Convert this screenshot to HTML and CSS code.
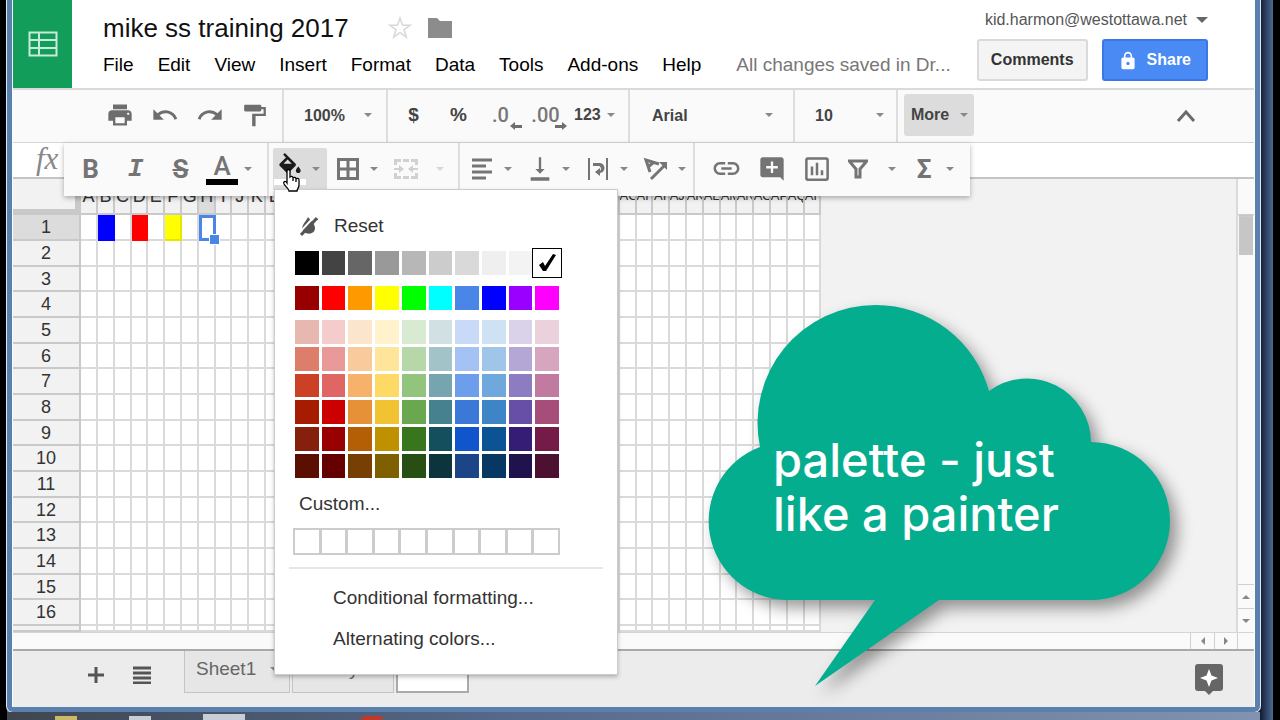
FILE: index.html
```
<!DOCTYPE html>
<html lang="en">
<head>
    <meta charset="UTF-8">
    <meta name="viewport" content="width=device-width, initial-scale=1.0">
    <title>mike ss training 2017</title>
    <link rel="stylesheet" href="styles.css">
</head>
<body>
    <div class="desktop">
        <div class="window">
            <header class="header">
                <a class="logo" href="#" aria-label="Sheets home">
                    <svg width="30" height="26" viewBox="0 0 30 26" fill="none" stroke="#c9ead8" stroke-width="2"><path d="M1.500 1.500h27v23h-27zM1 9h28M1 17h28M11 1v24"/></svg>
                </a>
                <div class="doc">
                    <div class="title-row">
                        <h1>mike ss training 2017</h1>
                        <button class="plain" aria-label="Star"><svg width="24" height="24" viewBox="0 0 24 24" fill="none" stroke="#d8d8d8" stroke-width="1.500"><path d="M12 2l2.600 7.300H22l-6 4.500 2.300 7.400L12 16.700l-6.300 4.500L8 13.800 2 9.300h7.400z"/></svg></button>
                        <button class="plain" aria-label="Move to folder"><svg width="24" height="22" viewBox="0 0 24 22" fill="#8c8c8c"><path d="M0 1h9l3 3h12v17H0z"/></svg></button>
                    </div>
                    <div class="menu-row">
                        <nav class="menu">
                            <button>File</button>
                            <button>Edit</button>
                            <button>View</button>
                            <button>Insert</button>
                            <button>Format</button>
                            <button>Data</button>
                            <button>Tools</button>
                            <button>Add-ons</button>
                            <button>Help</button>
                        </nav>
                        <span class="status">All changes saved in Dr...</span>
                    </div>
                </div>
                <div class="account">
                    <button class="email">kid.harmon@westottawa.net <span class="arrow dark"></span></button>
                    <div class="actions">
                        <button class="btn">Comments</button>
                        <button class="btn share">
                            <svg width="18" height="19" viewBox="3 0 18 23" fill="#fff"><path d="M18 8h-1V6c0-2.760-2.240-5-5-5S7 3.240 7 6v2H6c-1.100 0-2 .9-2 2v10c0 1.100.9 2 2 2h12c1.100 0 2-.9 2-2V10c0-1.100-.9-2-2-2zm-6 9c-1.100 0-2-.9-2-2s.9-2 2-2 2 .9 2 2-.9 2-2 2zm3.100-9H8.900V6c0-1.710 1.390-3.100 3.100-3.100 1.710 0 3.100 1.390 3.100 3.100v2z"/></svg>
                            Share
                        </button>
                    </div>
                </div>
            </header>

            <div class="toolbar">
                <div class="group first">
                    <button class="tool" aria-label="Print"><svg width="28" height="28" viewBox="0 0 24 24"><path d="M19 8H5c-1.660 0-3 1.340-3 3v6h4v4h12v-4h4v-6c0-1.660-1.340-3-3-3zm-3 11H8v-5h8v5zm3-7c-.55 0-1-.45-1-1s.45-1 1-1 1 .45 1 1-.45 1-1 1zm-1-9H6v4h12V3z"/></svg></button>
                    <button class="tool" aria-label="Undo"><svg width="28" height="28" viewBox="0 0 24 24"><path d="M12.500 8c-2.650 0-5.050.99-6.900 2.600L2 7v9h9l-3.620-3.620c1.390-1.160 3.160-1.880 5.120-1.880 3.540 0 6.550 2.310 7.600 5.500l2.370-.78C21.080 11.030 17.150 8 12.500 8z"/></svg></button>
                    <button class="tool" aria-label="Redo"><svg width="28" height="28" viewBox="0 0 24 24"><path d="M18.400 10.600C16.550 8.990 14.150 8 11.500 8c-4.650 0-8.580 3.030-9.960 7.220L3.900 16c1.050-3.190 4.050-5.500 7.600-5.500 1.950 0 3.730.72 5.120 1.880L13 16h9V7l-3.600 3.600z"/></svg></button>
                    <button class="tool" aria-label="Paint format"><svg width="24" height="25" viewBox="2 1 21 21"><path d="M18 4V3c0-.55-.45-1-1-1H4c-.55 0-1 .45-1 1v4c0 .55.45 1 1 1h13c.55 0 1-.45 1-1V6h2v4H10v11h3v-9h9V4h-4z"/></svg></button>
                </div>
                <div class="group zoom">
                    <select aria-label="Zoom"><option>100%</option></select>
                    <span class="arrow"></span>
                </div>
                <div class="group formats">
                    <button class="tool sign">$</button>
                    <button class="tool sign">%</button>
                    <button class="tool decimal">.0<svg width="12" height="8" viewBox="0 0 12 8"><path d="M0 4l5-4v3h7v3H5v2z"/></svg></button>
                    <button class="tool decimal">.00<svg width="12" height="8" viewBox="0 0 12 8"><path d="M12 4L7 0v3H0v3h7v2z"/></svg></button>
                    <button class="tool more-formats">123 <span class="arrow"></span></button>
                </div>
                <div class="group font">
                    <select aria-label="Font"><option>Arial</option></select>
                    <span class="arrow"></span>
                </div>
                <div class="group size">
                    <select aria-label="Font size"><option>10</option></select>
                    <span class="arrow"></span>
                </div>
                <button class="more">More <span class="arrow"></span></button>
                <button class="collapse" aria-label="Hide menus"><svg width="20" height="14" viewBox="0 0 20 14" fill="none" stroke="#6b6b6b" stroke-width="3"><path d="M2 12l8-9 8 9"/></svg></button>

                <div class="overflow-bar">
                    <div class="group text-tools">
                        <button class="icon letter">B</button>
                        <button class="icon letter italic">I</button>
                        <button class="icon letter strike">S</button>
                        <button class="split">
                            <span class="pic letter text-color">A</span>
                            <span class="arrow"></span>
                        </button>
                    </div>
                    <div class="group cell-tools">
                        <button class="split active" aria-label="Fill color">
                            <span class="pic fill">
                                <svg width="26" height="26" viewBox="1 0 22 22" fill="#1b1b1b"><path d="M16.560 8.940L7.620 0 6.210 1.410l2.380 2.380-5.150 5.150c-.59.59-.59 1.540 0 2.120l5.500 5.500c.29.29.68.44 1.060.44s.77-.15 1.060-.44l5.500-5.500c.59-.58.59-1.530 0-2.120zM6.500 9L10 5.500 13.500 9H6.500zM19 11.500s-2 2.170-2 3.500c0 1.100.9 2 2 2s2-.9 2-2c0-1.330-2-3.500-2-3.500z"/></svg>
                            </span>
                            <span class="arrow"></span>
                        </button>
                        <button class="split" aria-label="Borders">
                            <span class="pic"><svg width="22" height="22" viewBox="0 0 22 22" fill="none" stroke="#747474" stroke-width="3"><path d="M1.500 1.500h19v19h-19zM11 1v20M1 11h20"/></svg></span>
                            <span class="arrow"></span>
                        </button>
                        <button class="split wide" aria-label="Merge cells" disabled>
                            <span class="pic"><svg width="26" height="22" viewBox="0 0 26 22"><path d="M1 1h7v3H4v3H1zM10 1h6v3h-6zM18 1h7v6h-3V4h-4zM1 15h3v3h4v3H1zM10 18h6v3h-6zM18 18h4v-3h3v6h-7zM1 10h5V7l5 4-5 4v-3H1zM25 10h-5V7l-5 4 5 4v-3h5z"/></svg></span>
                            <span class="arrow"></span>
                        </button>
                    </div>
                    <div class="group align-tools">
                        <button class="split" aria-label="Horizontal align">
                            <span class="pic"><svg width="22" height="22" viewBox="0 0 22 22" fill="none" stroke="#747474" stroke-width="3"><path d="M1 2h20M1 8h14M1 14h20M1 20h14"/></svg></span>
                            <span class="arrow"></span>
                        </button>
                        <button class="split" aria-label="Vertical align">
                            <span class="pic"><svg width="28" height="28" viewBox="0 0 24 24"><path d="M16 12h-3V2h-2v10H8l4 4 4-4zM4 19v3h16v-3H4z"/></svg></span>
                            <span class="arrow"></span>
                        </button>
                        <button class="split" aria-label="Text wrapping">
                            <span class="pic"><svg width="22" height="22" viewBox="0 0 22 22"><path d="M1 0h2v22H1zM19 0h2v22h-2zM6 5h6a5 5 0 0 1 1 10v3l-5-4 5-4v3a3 3 0 0 0-1-5H6z"/></svg></span>
                            <span class="arrow"></span>
                        </button>
                        <button class="split" aria-label="Text rotation">
                            <span class="pic"><svg width="26" height="24" viewBox="0 0 26 24" fill="none" stroke="#747474" stroke-width="3"><path d="M7 15L3 3l13 4M5 10l6-5M8 22L21 9"/><path d="M24 5v8l-8-8z" fill="#747474" stroke="none"/></svg></span>
                            <span class="arrow"></span>
                        </button>
                    </div>
                    <div class="group insert-tools">
                        <button class="icon" aria-label="Insert link"><svg width="31" height="31" viewBox="0 0 24 24"><path d="M3.900 12c0-1.710 1.390-3.100 3.100-3.100h4V7H7c-2.760 0-5 2.240-5 5s2.240 5 5 5h4v-1.900H7c-1.710 0-3.100-1.390-3.100-3.100zM8 13h8v-2H8v2zm9-6h-4v1.900h4c1.710 0 3.100 1.390 3.100 3.100s-1.390 3.100-3.100 3.100h-4V17h4c2.760 0 5-2.240 5-5s-2.240-5-5-5z"/></svg></button>
                        <button class="icon" aria-label="Insert comment"><svg width="28" height="28" viewBox="0 0 24 24"><path d="M22 4c0-1.100-.9-2-2-2H4c-1.100 0-2 .9-2 2v13c0 1.100.9 2 2 2h15l3 3V4zm-5 7.500h-4v4h-2v-4H7v-2h4v-4h2v4h4v2z"/></svg></button>
                        <button class="icon" aria-label="Insert chart"><svg width="30" height="30" viewBox="0 0 24 24"><path d="M9 17H7v-7h2v7zm4 0h-2V7h2v10zm4 0h-2v-4h2v4zm2 2.500H5c-.3 0-.5-.2-.5-.5V5c0-.3.2-.5.5-.5h14c.3 0 .5.2.5.5v14c0 .3-.2.500-.5.500zM19.500 2.500h-15c-1.100 0-2 .9-2 2v15c0 1.100.9 2 2 2h15c1.100 0 2-.9 2-2v-15c0-1.100-.9-2-2-2z" fill-rule="evenodd"/></svg></button>
                        <button class="split wide" aria-label="Filter">
                            <span class="pic"><svg width="22" height="20" viewBox="0 0 22 20" fill="none" stroke="#747474" stroke-width="3"><path d="M1 2h20M3 3l6 7v8h4v-8l6-7"/></svg></span>
                            <span class="arrow"></span>
                        </button>
                        <button class="split">
                            <span class="pic letter">Σ</span>
                            <span class="arrow"></span>
                        </button>
                    </div>

                    <div class="color-menu">
                        <button class="item reset">
                            <svg width="18" height="20" viewBox="0 0 18 20" fill="#555"><path d="M8 1c1 2 7 6 7 11 0 6-7 7-11 4C-1 11 6 6 8 1z"/><path d="M0 16L14 1" stroke="#fff" stroke-width="2"/><path d="M1 19L17 2" stroke="#555" stroke-width="3"/></svg>
                            Reset
                        </button>
                        <div class="swatches" id="grays"></div>
                        <div class="swatches" id="brights"></div>
                        <div class="swatches shades" id="shades"></div>
                        <button class="item custom">Custom...</button>
                        <div class="custom-colors" id="customs"></div>
                        <hr>
                        <button class="item">Conditional formatting...</button>
                        <button class="item">Alternating colors...</button>
                    </div>

                    <svg class="pointer" width="20" height="24" viewBox="0 0 20 24" fill="#fff" stroke="#000" stroke-width="1.300"><path d="M5 13V3c0-2 3-2 3 0v6c1-1 3-1 3 1 1-1 3-1 3 1 1-1 3-1 3 1v5c0 3-2 4-2 6H7c0-2-3-4-5-7-1-2 1-4 3-1zM11 10v3M14 11v3"/></svg>
                </div>
            </div>

            <div class="formula-bar">
                <label for="formula">fx</label>
                <input id="formula" type="text">
            </div>

            <main class="sheet-area">
                <div class="sheet">
                    <table class="grid">
                        <thead><tr id="columns"><th class="corner"></th></tr></thead>
                        <tbody id="rows"></tbody>
                    </table>
                </div>
                <div class="v-scroll">
                    <div class="thumb"></div>
                    <button class="up" aria-label="Scroll up"></button>
                    <button class="down" aria-label="Scroll down"></button>
                </div>
            </main>
            <div class="h-scroll">
                <button class="left" aria-label="Scroll left"></button>
                <button class="right" aria-label="Scroll right"></button>
            </div>

            <footer class="footer">
                <button class="plain" aria-label="Add sheet"><svg width="16" height="16" viewBox="0 0 16 16" fill="none" stroke="#555" stroke-width="3"><path d="M8 0v16M0 8h16"/></svg></button>
                <button class="plain" aria-label="All sheets"><svg width="18" height="18" viewBox="0 0 18 18" fill="none" stroke="#555" stroke-width="3"><path d="M0 2h18M0 7h18M0 12h18M0 17h18"/></svg></button>
                <div class="tabs">
                    <button class="tab">Sheet1 <span class="arrow"></span></button>
                    <button class="tab second">y</button>
                    <button class="tab current" aria-label="Current sheet"></button>
                </div>
                <button class="plain explore" aria-label="Explore"><svg width="28" height="31" viewBox="0 0 28 31" fill="#666"><path d="M3 0h22q3 0 3 3v21q0 3-3 3h-7l-4 4-4-4H3q-3 0-3-3V3q0-3 3-3z"/><path fill="#fff" d="M14 5l2.500 6.500L23 14l-6.500 2.500L14 23l-2.500-6.500L5 14l6.500-2.500z"/></svg></button>
            </footer>
        </div>
        <div class="taskbar">
            <span class="app yellow"></span>
            <span class="app"></span>
            <span class="app wide"></span>
            <span class="app red"></span>
        </div>
    </div>

    <div class="cloud">
        <svg width="463" height="384" viewBox="0 0 463 384" fill="#05ad8f">
            <path d="M80 296A79 79 0 0 1 53 143A118 118 0 0 1 169 1A118 118 0 0 1 282 87A64 64 0 0 1 384 138A79 79 0 0 1 384 296H232L108 382L168 296z"/>
        </svg>
        <p>palette - just<br>like a painter</p>
    </div>

    <script>
        const grays = ['#000000', '#434343', '#666666', '#999999', '#b7b7b7', '#cccccc', '#d9d9d9', '#efefef', '#f3f3f3', '#ffffff'];
        const brights = ['#980000', '#ff0000', '#ff9900', '#ffff00', '#00ff00', '#00ffff', '#4a86e8', '#0000ff', '#9900ff', '#ff00ff'];
        const shades = [
            '#e6b8af', '#f4cccc', '#fce5cd', '#fff2cc', '#d9ead3', '#d0e0e3', '#c9daf8', '#cfe2f3', '#d9d2e9', '#ead1dc',
            '#dd7e6b', '#ea9999', '#f9cb9c', '#ffe599', '#b6d7a8', '#a2c4c9', '#a4c2f4', '#9fc5e8', '#b4a7d6', '#d5a6bd',
            '#cc4125', '#e06666', '#f6b26b', '#ffd966', '#93c47d', '#76a5af', '#6d9eeb', '#6fa8dc', '#8e7cc3', '#c27ba0',
            '#a61c00', '#cc0000', '#e69138', '#f1c232', '#6aa84f', '#45818e', '#3c78d8', '#3d85c6', '#674ea7', '#a64d79',
            '#85200c', '#990000', '#b45f06', '#bf9000', '#38761d', '#134f5c', '#1155cc', '#0b5394', '#351c75', '#741b47',
            '#5b0f00', '#660000', '#783f04', '#7f6000', '#274e13', '#0c343d', '#1c4587', '#073763', '#20124d', '#4c1130'
        ];

        function addSwatches(id, colors) {
            const box = document.getElementById(id);
            colors.forEach(color => {
                const button = document.createElement('button');
                button.style.background = color;
                button.setAttribute('aria-label', color);
                box.appendChild(button);
            });
        }

        addSwatches('grays', grays);
        addSwatches('brights', brights);
        addSwatches('shades', shades);
        addSwatches('customs', Array(10).fill('#ffffff'));

        // White is the current fill
        const current = document.querySelector('#grays button:last-child');
        current.classList.add('checked');
        current.innerHTML = '<svg width="18" height="20" viewBox="0 0 18 20"><path d="M1 12l4-3 2 4L15 1l3 1L8 18H5z"/></svg>';

        // Grid: columns A to AR, rows 1 to 16 and the top of the next one
        const columnCount = 44;
        const columns = document.getElementById('columns');
        for (let i = 0; i < columnCount; i++) {
            const letter = String.fromCharCode(65 + i % 26);
            const th = document.createElement('th');
            th.innerHTML = i < 26 ? `<span>${letter}</span>` : `<span class="double">A${letter}</span>`;
            columns.appendChild(th);
        }
        columns.children[8].classList.add('selected');

        const rows = document.getElementById('rows');
        for (let r = 1; r <= 17; r++) {
            const tr = document.createElement('tr');
            tr.innerHTML = `<th>${r < 17 ? r : ''}</th>` + '<td></td>'.repeat(columnCount);
            rows.appendChild(tr);
        }
        const first = rows.children[0].children;
        first[2].classList.add('blue');
        first[4].classList.add('red');
        first[6].classList.add('yellow');
        first[8].classList.add('cursor');
    </script>
</body>
</html>
```
FILE: styles.css
```
* {
    box-sizing: border-box;
}

body {
    margin: 0;
    padding: 0 7px;
    background: #000;
    font-family: "Liberation Sans", Arial, sans-serif;
    color: #333;
    overflow: hidden;
}

button,
select,
input {
    font: inherit;
    color: inherit;
    background: none;
    border: 0;
    margin: 0;
    padding: 0;
}

svg {
    display: block;
    flex: none;
}

.desktop {
    min-height: 100vh;
    display: flex;
    flex-direction: column;
    padding-right: 13px;
    background: linear-gradient(to right, #4a6a95 98%, #141d33 99%, #4a6a95 100%);
}

.window {
    flex: 1;
    display: flex;
    flex-direction: column;
    border: 5px solid #5a80ad;
    border-top: 0;
    border-radius: 0 0 6px 6px;
    padding: 0 1px;
    background: #fff;
    box-shadow: 0 0 0 1px #dfe8f2;
}

/* Header */
.header {
    display: flex;
    height: 90px;
    border-bottom: 2px solid #dadada;
    background: #fff;
}

.logo {
    width: 59px;
    display: flex;
    align-items: center;
    justify-content: center;
    background: #129d5a;
}

.doc {
    flex: 1;
    padding: 8px 0 0 31px;
}

.title-row {
    display: flex;
    align-items: center;
    height: 40px;
}

h1 {
    margin: 0 39px 0 0;
    font-size: 26px;
    font-weight: normal;
    color: #111;
}

.title-row .plain {
    margin-right: 16px;
}

.menu-row {
    display: flex;
    align-items: center;
    height: 34px;
    font-size: 19px;
    white-space: nowrap;
}

.menu {
    display: flex;
    gap: 24px;
    color: #000;
}

.status {
    margin-left: 35px;
    color: #777;
}

.account {
    display: flex;
    flex-direction: column;
    align-items: flex-end;
    padding-right: 46px;
}

.email {
    display: flex;
    align-items: center;
    gap: 9px;
    height: 39px;
    font-size: 16px;
    color: #555;
}

.actions {
    display: flex;
    gap: 14px;
}

.btn {
    height: 42px;
    padding: 0 12px;
    border: 2px solid #dadada;
    border-radius: 3px;
    background: #f4f4f4;
    font-size: 16px;
    font-weight: bold;
}

.share {
    display: flex;
    align-items: center;
    gap: 10px;
    padding: 0 15px;
    border-color: #3b78e7;
    background: #4a8af4;
    color: #fff;
}

.arrow {
    flex: none;
    width: 8px;
    height: 4px;
    border: 4px solid transparent;
    border-top-color: #888;
    border-bottom: 0;
}

.arrow.dark {
    width: 12px;
    border-width: 6px;
    border-bottom: 0;
    border-top-color: #666;
}

/* Main toolbar */
.toolbar {
    position: relative;
    display: flex;
    height: 53px;
    border-bottom: 1px solid #d5d5d5;
    background: #fafafa;
    font-size: 16px;
    font-weight: bold;
    color: #444;
    fill: #6e6e6e;
}

.group {
    display: flex;
    align-items: center;
    border-right: 2px solid #dedede;
}

.first {
    padding: 0 5px 2px 84px;
}

.tool {
    width: 45px;
    height: 44px;
    display: flex;
    align-items: center;
    justify-content: center;
}

.group select {
    flex: 1;
    appearance: none;
}

.zoom {
    width: 104px;
    padding: 0 14px 2px 20px;
}

.formats {
    width: 242px;
    padding: 0 0 2px 3px;
}

.sign {
    font-size: 19px;
}

.decimal {
    position: relative;
    padding-right: 6px;
    font-family: Roboto, sans-serif;
    font-size: 20px;
    font-weight: 500;
    color: #777;
}

.decimal svg {
    position: absolute;
    right: 4px;
    bottom: 7px;
}

.more-formats {
    width: 56px;
    justify-content: flex-start;
    gap: 6px;
    padding-left: 3px;
}

.font {
    width: 165px;
    padding: 0 20px 2px 22px;
}

.size {
    width: 103px;
    padding: 0 12px 2px 20px;
}

.more {
    display: flex;
    align-items: center;
    gap: 11px;
    height: 42px;
    margin: 4px 0 0 6px;
    padding: 0 6px 0 7px;
    border-radius: 3px;
    background: #dcdcdc;
}

.collapse {
    margin-left: auto;
    margin-right: 58px;
}

/* Second toolbar, floats over the sheet */
.overflow-bar {
    position: absolute;
    z-index: 2;
    top: 53px;
    left: 51px;
    display: flex;
    height: 53px;
    background: #fafafa;
    box-shadow: 0 2px 5px rgba(0, 0, 0, 0.3);
    fill: #747474;
}

.overflow-bar .group {
    gap: 4px;
}

.text-tools {
    padding: 0 8px 2px 6px;
}

.cell-tools {
    padding: 0 7px 2px 4px;
}

.align-tools {
    padding: 0 0 2px 5px;
}

.overflow-bar .insert-tools {
    padding: 0 9px 2px 11px;
    border: 0;
}

.icon {
    width: 41px;
    height: 42px;
    display: flex;
    align-items: center;
    justify-content: center;
}

.letter {
    font-family: Roboto, sans-serif;
    font-size: 26px;
    font-weight: bold;
    color: #747474;
}

.italic {
    font-family: "Liberation Mono", monospace;
    font-style: italic;
}

.strike {
    text-decoration: line-through;
}

.split {
    display: flex;
    align-items: center;
    gap: 6px;
    width: 54px;
    height: 42px;
    padding-left: 1px;
    border-radius: 2px;
}

.pic {
    width: 32px;
    height: 32px;
    display: flex;
    align-items: center;
    justify-content: center;
}

.wide {
    width: 62px;
    gap: 14px;
}

.split:disabled {
    opacity: 0.3;
}

.active {
    background: #dcdcdc;
}

.text-color {
    border-bottom: 6px solid #000;
    font-weight: 500;
}

.fill {
    border-bottom: 6px solid #fff;
}

.pointer {
    position: absolute;
    left: 218px;
    top: 25px;
}

/* Fill color menu */
.color-menu {
    position: absolute;
    top: 46px;
    left: 210px;
    width: 344px;
    padding: 15px 14px;
    border: 1px solid #ccc;
    background: #fff;
    box-shadow: 0 2px 4px rgba(0, 0, 0, 0.25);
    font-size: 19px;
    font-weight: normal;
    color: #333;
}

.item {
    display: block;
    width: 100%;
    height: 41px;
    padding-left: 44px;
    text-align: left;
}

.reset {
    display: flex;
    align-items: center;
    gap: 16px;
    padding-left: 11px;
}

.swatches {
    display: grid;
    grid-template-columns: repeat(10, 1fr);
    gap: 3px;
    height: 24px;
    margin: 5px 44px 11px 6px;
}

.swatches + .swatches {
    margin-top: 0;
    margin-bottom: 10px;
}

.swatches.shades {
    height: 158px;
    margin-bottom: 5px;
}

.checked {
    display: flex;
    align-items: center;
    justify-content: center;
    outline: 1px solid #000;
    outline-offset: 2px;
    fill: #000;
}

.custom {
    padding-left: 10px;
}

.custom-colors {
    display: grid;
    grid-template-columns: repeat(10, 1fr);
    gap: 3px;
    height: 27px;
    margin: 4px 43px 12px 4px;
    padding: 2px;
    background: #ccc;
}

hr {
    height: 2px;
    margin: 0 0 8px;
    border: 0;
    background: #e6e6e6;
}

/* Formula bar */
.formula-bar {
    display: flex;
    height: 36px;
    border-bottom: 2px solid #c4c4c4;
    background: #fff;
}

.formula-bar label {
    width: 70px;
    padding-left: 23px;
    font: italic 31px/32px "Liberation Serif", serif;
    color: #888;
}

.formula-bar input {
    flex: 1;
}

/* Sheet */
.sheet-area {
    flex: 1;
    display: flex;
    background: #f2f2f2;
}

.sheet {
    flex: 1;
    overflow: hidden;
}

.grid {
    table-layout: fixed;
    width: 808px;
    border-spacing: 0;
}

.grid th,
.grid td {
    width: 17px;
    height: 26px;
    padding: 0;
    border-right: 2px solid #dadada;
    border-bottom: 2px solid #dadada;
    background: #fff;
    font-size: 18px;
    line-height: 20px;
    font-weight: normal;
    color: #333;
}

.grid tr > :nth-child(5n) {
    width: 16px;
}

.grid tbody tr:nth-child(3n) > * {
    height: 25px;
}

.grid tbody tr:last-child > * {
    height: 6px;
}

.grid tr > th:first-child {
    width: 68px;
    background: #f2f2f2;
    border-color: #c9c9c9;
}

.grid tbody tr:first-child > th {
    background: #dcdcdc;
}

.grid thead th {
    height: 36px;
    border-color: #c9c9c9;
    background: #f2f2f2;
}

.grid thead .corner {
    border-right: 6px solid #bcbcbc;
    border-bottom: 6px solid #bcbcbc;
}

.grid thead .selected {
    background: #dcdcdc;
}

.grid thead span {
    display: block;
    overflow: hidden;
    white-space: nowrap;
}

.grid thead .double {
    font-size: 13px;
}

.grid .blue {
    background: #00f;
    border-color: #00f;
}

.grid .red {
    background: #f00;
    border-color: #f00;
}

.grid .yellow {
    background: #ff0;
    border-color: #e6e600;
}

.grid .cursor {
    position: relative;
    outline: 3px solid #4a86e8;
    outline-offset: -3px;
}

.cursor::after {
    content: '';
    position: absolute;
    right: -6px;
    bottom: -6px;
    width: 9px;
    height: 9px;
    border: 1px solid #fff;
    background: #4a86e8;
}

/* Scrollbars */
.v-scroll {
    width: 18px;
    display: flex;
    flex-direction: column;
    padding-top: 35px;
    border-left: 2px solid #dadada;
    background: #fafafa;
}

.thumb {
    height: 42px;
    margin-bottom: auto;
    border: 1px solid #fafafa;
    border-top: 3px double #ccc;
    background: #c6c6c6;
}

.v-scroll button {
    height: 24px;
    display: flex;
    align-items: center;
    justify-content: center;
    border-top: 1px solid #d0d0d0;
}

.up::before,
.down::before,
.left::before,
.right::before {
    content: '';
    border: 4px solid transparent;
}

.up::before {
    border-bottom-color: #888;
    border-top: 0;
}

.down::before {
    border-top-color: #888;
    border-bottom: 0;
}

.left::before {
    border-right-color: #888;
    border-left: 0;
}

.right::before {
    border-left-color: #888;
    border-right: 0;
}

.h-scroll {
    display: flex;
    justify-content: flex-end;
    height: 19px;
    padding-right: 16px;
    border-top: 1px solid #d5d5d5;
    border-bottom: 2px solid #a9a9a9;
    background: #fafafa;
}

.h-scroll button {
    width: 24px;
    display: flex;
    align-items: center;
    justify-content: center;
    border-left: 1px solid #d0d0d0;
}

.h-scroll button:last-child {
    border-right: 1px solid #d0d0d0;
}

/* Sheet tabs */
.footer {
    display: flex;
    align-items: flex-start;
    height: 56px;
    padding-left: 75px;
    background: #ececec;
}

.footer .plain {
    align-self: center;
    margin: 0 29px 8px 0;
}

.footer .plain + .plain {
    margin-right: 33px;
}

.tabs {
    display: flex;
    gap: 2px;
}

.tab {
    display: flex;
    align-items: center;
    gap: 14px;
    width: 106px;
    height: 42px;
    padding: 0 0 6px 11px;
    border: 1px solid #c4c4c4;
    border-top: 0;
    background: #e6e6e6;
    font-size: 19px;
    color: #666;
}

.tab.second {
    width: 102px;
    padding-left: 56px;
}

.tab.current {
    width: 73px;
    border: 2px solid #aaa;
    border-top: 0;
    background: #fff;
}

.footer .explore {
    margin: 0 31px 0 auto;
}

.taskbar {
    display: flex;
    align-items: flex-end;
    height: 8px;
    padding-left: 48px;
    gap: 52px;
    background: linear-gradient(to right, #3f464f, #56698a 40%, #8193b0);
}

.app {
    width: 22px;
    height: 4px;
    background: #c9ced6;
}

.app.wide {
    width: 42px;
    height: 6px;
}

.app.yellow {
    background: #cdb86a;
}

.app.red {
    margin-left: 64px;
    border-radius: 12px 12px 0 0;
    background: #c0392b;
}

/* Callout over everything */
.cloud {
    position: absolute;
    z-index: 3;
    top: 304px;
    left: 707px;
}

.cloud svg {
    overflow: visible;
    filter: drop-shadow(7px 8px 8px rgba(0, 0, 0, 0.4));
}

.cloud p {
    position: absolute;
    top: 129px;
    left: 66px;
    margin: 0;
    font: 500 47px/54px Inter, sans-serif;
    color: #fff;
    white-space: nowrap;
}
```
